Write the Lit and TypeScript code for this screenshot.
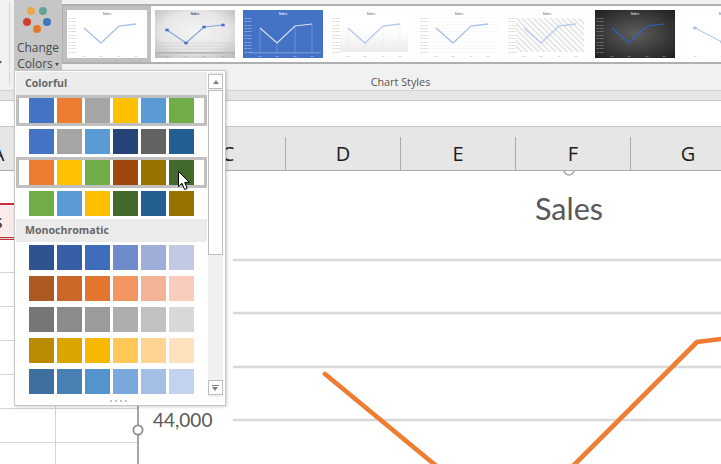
import { LitElement, html, svg, css } from "lit";
import { customElement } from "lit/decorators.js";

const colorful = [
  ["#4472c4", "#ed7d31", "#a5a5a5", "#ffc000", "#5b9bd5", "#70ad47"],
  ["#4472c4", "#a5a5a5", "#5b9bd5", "#264478", "#636363", "#255e91"],
  ["#ed7d31", "#ffc000", "#70ad47", "#9e480e", "#997300", "#43682b"],
  ["#70ad47", "#5b9bd5", "#ffc000", "#43682b", "#255e91", "#997300"],
];
const mono = [
  ["#2e5391", "#375fa5", "#3f6cbb", "#6e8ccb", "#9faed8", "#c1c9e3"],
  ["#ac5a22", "#cb6728", "#e2762e", "#f39563", "#f4b296", "#f9ccbb"],
  ["#767676", "#8b8b8b", "#9b9b9b", "#adadad", "#c1c1c1", "#d8d8d8"],
  ["#ba8b00", "#dba500", "#f6b900", "#ffc857", "#ffd591", "#ffe2bd"],
  ["#3e6f9f", "#4a81b5", "#5394cf", "#7aa8dc", "#a3bfe5", "#c3d3ed"],
];

interface ThumbCfg {
  bg: string;
  line: string;
  label: string;
  title: string;
  w?: number;
  pts?: number[][];
  grid?: string;
  drop?: string;
  markers?: string;
  hatch?: boolean;
  fade?: boolean;
  strip?: string;
  border?: boolean;
  noY?: boolean;
  lower?: string;
}

const P1 = [[17, 18], [34, 33], [52, 16], [69, 14]];
const thumbs: ThumbCfg[] = [
  { bg: "#fff", line: "#a9c0e8", label: "#a8a8a8", title: "#8a8a8a", w: 1.3 },
  { bg: "url(#g2)", line: "#86a6dc", label: "#8a8a8a", title: "#444", markers: "#4472c4", pts: [[12, 20], [31, 33], [49, 17], [68, 15]], strip: "#b4b4b4", noY: true, lower: "#cfcfcf", w: 1.2 },
  { bg: "#4472c4", line: "#d5e0f4", label: "#dbe4f5", title: "#dfe7f6", drop: "#7f9fd8", strip: "#6a8fd3", w: 1.2 },
  { bg: "#fff", line: "#b7caec", label: "#a8a8a8", title: "#8a8a8a", fade: true, drop: "#ededed", border: true, w: 1.3 },
  { bg: "#fff", line: "#a9c0e8", label: "#a8a8a8", title: "#8a8a8a", grid: "#f0f0f0", border: true, w: 1.3 },
  { bg: "#fff", line: "#bccdec", label: "#a8a8a8", title: "#8a8a8a", hatch: true, border: true, w: 1.4 },
  { bg: "url(#g7)", line: "#2f62c0", label: "#c4c4c4", title: "#d0d0d0", w: 1.2 },
  { bg: "#fff", line: "#a9c0e8", label: "#a8a8a8", title: "#8a8a8a", markers: "#a9c0e8", pts: [[12, 18], [39, 32], [60, 16], [78, 14]], border: true, noY: true },
];

function thumb(c: ThumbCfg) {
  const pts = c.pts ?? P1;
  const ys = [8, 11.4, 14.8, 18.2, 21.6, 25, 28.4, 31.8, 35.2, 38.6, 42];
  return html`<svg class="thumb" viewBox="0 0 80 48" width="80" height="48">
    <defs>
      <radialGradient id="g2" cx="50%" cy="45%" r="70%"><stop offset="0" stop-color="#f4f4f4"/><stop offset="0.6" stop-color="#e6e6e6"/><stop offset="1" stop-color="#bdbdbd"/></radialGradient>
      <radialGradient id="g7" cx="50%" cy="50%" r="70%"><stop offset="0" stop-color="#5e5e5e"/><stop offset="1" stop-color="#1f1f1f"/></radialGradient>
      <linearGradient id="gf" x1="0" y1="0" x2="0" y2="1"><stop offset="0" stop-color="#fff"/><stop offset="1" stop-color="#ececec"/></linearGradient>
      <pattern id="ph" width="4" height="4" patternUnits="userSpaceOnUse" patternTransform="rotate(-45)"><rect width="4" height="4" fill="#fff"/><rect width="1.5" height="4" fill="#e0e0e0"/></pattern>
    </defs>
    <rect width="80" height="48" fill="${c.bg}" stroke="${c.border ? "#f4f4f4" : "none"}" stroke-width="0.6"/>
    ${c.hatch ? svg`<rect x="9" y="8" width="68" height="34" fill="url(#ph)"/>` : ""}
    ${c.fade ? svg`<rect x="9" y="20" width="68" height="22" fill="url(#gf)"/>` : ""}
    ${c.grid ? ys.map((y) => svg`<line x1="9" x2="78" y1="${y}" y2="${y}" stroke="${c.grid}" stroke-width="0.5"/>`) : ""}
    ${c.lower ? [33, 36, 39].map((y) => svg`<line x1="0" x2="80" y1="${y}" y2="${y}" stroke="${c.lower}" stroke-width="0.6"/>`) : ""}
    ${c.strip ? svg`<rect x="${c.markers ? 0 : 7}" y="42" width="${c.markers ? 80 : 71}" height="1.6" fill="${c.strip}"/>` : ""}
    ${c.drop ? pts.map((p) => svg`<line x1="${p[0]}" x2="${p[0]}" y1="${p[1]}" y2="43" stroke="${c.drop}" stroke-width="0.7"/>`) : ""}
    <text class="tt" x="40" y="5" fill="${c.title}" text-anchor="middle">Sales</text>
    ${c.noY ? "" : ys.map((y) => svg`<text class="tl" x="1.5" y="${y + 0.8}" fill="${c.label}">50,000</text>`)}
    ${pts.map((p) => svg`<text class="tl" x="${p[0] - 1.5}" y="46.5" fill="${c.label}">Q1</text>`)}
    <polyline points="${pts.map((p) => p.join(",")).join(" ")}" fill="none" stroke="${c.line}" stroke-width="${c.w ?? 1}"/>
    ${c.markers ? pts.map((p) => svg`<rect x="${p[0] - 1.7}" y="${p[1] - 1.3}" width="3.4" height="2.6" fill="${c.markers}"/>`) : ""}
  </svg>`;
}

@customElement("app-root")
export class AppRoot extends LitElement {
  static styles = css`
    :host { display: block; width: 721px; height: 464px; }
    * { box-sizing: border-box; }
    .app { position: relative; width: 721px; height: 464px; overflow: hidden; display: flex; flex-direction: column; background: #fff; font-family: "Open Sans", sans-serif; }
    .ribbon { flex: none; height: 91px; display: flex; background: #f1f1f1; border-bottom: 1px solid #d4d4d4; }
    .edge { flex: none; width: 9px; padding-top: 61px; }
    .edge i { display: block; width: 0; height: 0; border-top: 3px solid #555; border-right: 2px solid transparent; border-left: 0 solid transparent; }
    .divider { flex: none; width: 1px; margin: 2px 0 5px; background: #d6d6d6; }
    .change { flex: none; width: 48px; height: 70px; margin: 0 0 0 4px; background: #c6c6c6; display: flex; flex-direction: column; align-items: center; color: #4a4a4a; font-size: 12px; line-height: 16px; }
    .change svg { display: block; margin-bottom: 4px; flex: none; }
    .colors-label { display: flex; align-items: center; gap: 2px; }
    .colors-label i { width: 0; height: 0; border-top: 3px solid #444; border-left: 2.5px solid transparent; border-right: 2.5px solid transparent; }
    .styles { flex: 1; min-width: 0; display: flex; flex-direction: column; }
    .gallery { flex: none; height: 60px; margin-top: 4px; background: #fff; border-top: 2px solid #b0b0b0; border-bottom: 2px solid #b0b0b0; border-left: 1px solid #b0b0b0; display: flex; overflow: hidden; }
    .cell-t { flex: none; width: 88px; height: 56px; padding: 4px; }
    .cell-t.sel { background: #c0c0c0; }
    .thumb { display: block; }
    .tt { font-family: "Liberation Sans", sans-serif; font-size: 3.2px; font-weight: bold; }
    .tl { font-family: "Liberation Sans", sans-serif; font-size: 2.3px; }
    .group-label { margin-top: 10px; padding-left: 18px; text-align: center; font-size: 10.8px; line-height: 16px; color: #555; }
    .band { flex: none; height: 10px; background: #e6e6e6; border-bottom: 1px solid #c6c6c6; }
    .formula { flex: none; height: 26px; background: #fff; border-bottom: 1px solid #c6c6c6; }
    .head { flex: none; height: 44px; background: #e6e6e6; border-bottom: 1px solid #ababab; display: flex; align-items: flex-end; overflow: hidden; }
    .col { flex: none; width: 115px; height: 33px; border-right: 1px solid #ababab; text-align: center; font-size: 20px; line-height: 34px; color: #1c1c1c; }
    .col:first-child { margin-left: -59px; }
    .sheet { flex: 1; position: relative; overflow: hidden; display: grid; grid-template-columns: repeat(2, 115px); grid-auto-rows: 34px; margin-left: -59px; align-content: start; }
    .c { border-right: 1px solid #d4d4d4; border-bottom: 1px solid #d4d4d4; }
    .c.pick { background: #fbeaea; box-shadow: 0 -2px 0 #c8323f, 0 1px 0 #c8323f, inset 0 -1px 0 #c8323f; position: relative; padding-left: 53px; font-size: 18px; line-height: 33px; color: #222; overflow: hidden; }
    .chart { position: absolute; left: 190px; top: 0; display: block; }
    .ctitle { font-family: Lato, sans-serif; font-size: 30.5px; fill: #595959; }
    .cval { font-family: Lato, sans-serif; font-size: 19px; fill: #595959; }
    .menu { position: absolute; left: 14px; top: 70px; width: 212px; height: 336px; background: #fff; border: 1px solid #c8c8c8; box-shadow: 1px 1px 3px rgba(0,0,0,0.18); padding: 1px 1px 0 1px; display: grid; grid-template-columns: 191px 16px; grid-template-rows: 325px 1fr; }
    .list { display: flex; flex-direction: column; }
    .sec { height: 23px; background: #ebebeb; padding-left: 9px; font-size: 10.6px; font-weight: 700; line-height: 22px; color: #666; }
    .row { height: 31px; padding: 3px 13px; display: flex; gap: 3px; }
    .row.sel { box-shadow: inset 0 0 0 3px #c0c0c0; }
    .sw { flex: none; width: 25px; height: 25px; }
    .scroll { margin-left: 1px; width: 15px; background: #f0f0f0; display: flex; flex-direction: column; padding-top: 2px; }
    .btn { flex: none; width: 15px; height: 15px; background: #fff; border: 1px solid #bdbdbd; display: flex; align-items: center; justify-content: center; }
    .btn .up { width: 0; height: 0; border-bottom: 4px solid #808080; border-left: 3.5px solid transparent; border-right: 3.5px solid transparent; }
    .btn .down { width: 7px; height: 5px; border-top: 1px solid #808080; position: relative; }
    .btn .down::after { content: ""; position: absolute; left: 0; top: 1px; border-top: 4px solid #808080; border-left: 3.5px solid transparent; border-right: 3.5px solid transparent; }
    .thumbbar { flex: none; width: 15px; height: 165px; margin-top: 1px; background: #fff; border: 1px solid #bdbdbd; }
    .btn.last { margin-top: auto; margin-bottom: 2px; }
    .grip { grid-column: 1 / span 2; display: flex; justify-content: center; gap: 3px; padding: 3px 3px 0 0; }
    .grip i { width: 2px; height: 2px; background: #b4c2d6; }
    .cursor { position: absolute; left: 178px; top: 171px; display: block; }
  `;

  render() {
    return html`<div class="app">
      <div class="ribbon">
        <div class="edge"><i></i></div>
        <div class="divider"></div>
        <div class="change">
          <svg width="48" height="36" viewBox="0 0 48 36">
            <circle cx="17" cy="11" r="4" fill="#e9a84a"/>
            <circle cx="29" cy="11" r="4" fill="#5fa58f"/>
            <circle cx="13" cy="22" r="4" fill="#cf3f2e"/>
            <circle cx="33" cy="22" r="4" fill="#3f78b6"/>
            <circle cx="23" cy="29" r="4" fill="#e07a2a"/>
          </svg>
          <span>Change</span>
          <span class="colors-label">Colors<i></i></span>
        </div>
        <div class="styles">
          <div class="gallery">
            ${thumbs.map((t, i) => html`<div class="cell-t ${i === 0 ? "sel" : ""}">${thumb(t)}</div>`)}
          </div>
          <div class="group-label">Chart Styles</div>
        </div>
      </div>
      <div class="band"></div>
      <div class="formula"></div>
      <div class="head">
        ${["A", "B", "C", "D", "E", "F", "G"].map((c) => html`<div class="col">${c}</div>`)}
      </div>
      <div class="sheet">
        ${Array.from({ length: 18 }, (_, i) =>
          i === 2 ? html`<div class="c pick">s</div>` : html`<div class="c"></div>`
        )}
        <svg class="chart" width="590" height="295" viewBox="131 170 590 295">
          <rect x="137" y="170" width="584" height="295" fill="#fff"/>
          <line x1="138" x2="138" y1="170" y2="465" stroke="#a6a6a6" stroke-width="2"/>
          <circle cx="569" cy="169" r="5" fill="#fff" stroke="#a6a6a6" stroke-width="1.6"/>
          <circle cx="138" cy="429" r="4.6" fill="#fff" stroke="#8c8c8c" stroke-width="1.8"/>
          ${[259, 312, 366, 419].map((y) => svg`<line x1="233" x2="721" y1="${y}" y2="${y}" stroke="#d9d9d9" stroke-width="2.4"/>`)}
          <text class="ctitle" x="569" y="219" text-anchor="middle">Sales</text>
          <text class="cval" x="153" y="426">44,000</text>
          <polyline points="325,373 440,468 570,468 697,341 721,338" fill="none" stroke="#ed7d31" stroke-width="4.6" stroke-linecap="round" stroke-linejoin="round"/>
        </svg>
      </div>
      <div class="menu">
        <div class="list">
          <div class="sec">Colorful</div>
          ${colorful.map((r, i) => html`<div class="row ${i === 0 || i === 2 ? "sel" : ""}">
            ${r.map((c) => html`<div class="sw" style="background:${c}"></div>`)}
          </div>`)}
          <div class="sec">Monochromatic</div>
          ${mono.map((r) => html`<div class="row">
            ${r.map((c) => html`<div class="sw" style="background:${c}"></div>`)}
          </div>`)}
        </div>
        <div class="scroll">
          <div class="btn"><div class="up"></div></div>
          <div class="thumbbar"></div>
          <div class="btn last"><div class="down"></div></div>
        </div>
        <div class="grip"><i></i><i></i><i></i><i></i></div>
      </div>
      <svg class="cursor" width="14" height="20" viewBox="0 0 14 20">
        <path d="M0.5 0.5 L0.5 15.5 L4 12.3 L6.6 18.5 L9.2 17.4 L6.7 11.5 L11.2 11.2 Z" fill="#fff" stroke="#000" stroke-width="1"/>
      </svg>
    </div>`;
  }
}
